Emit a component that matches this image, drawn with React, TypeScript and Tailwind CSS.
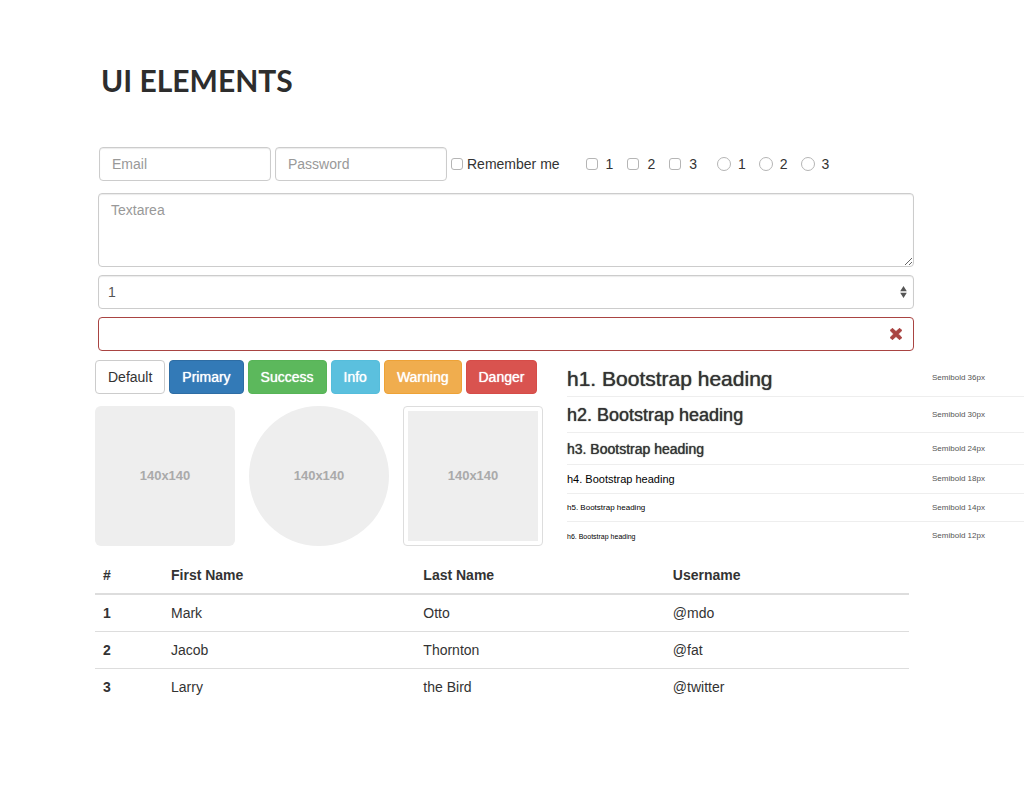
import React from 'react';

const buttons = [
  { label: 'Default', style: 'bg-white border-[#ccc] text-[#333]' },
  { label: 'Primary', style: 'bg-[#337ab7] border-[#2e6da4] text-white text-shadow-[0_0_1px_#fff]' },
  { label: 'Success', style: 'bg-[#5cb85c] border-[#57b457] text-white text-shadow-[0_0_1px_#fff]' },
  { label: 'Info', style: 'bg-[#5bc0de] border-[#55bddb] text-white text-shadow-[0_0_1px_#fff]' },
  { label: 'Warning', style: 'bg-[#f0ad4e] border-[#eea236] text-white text-shadow-[0_0_1px_#fff]' },
  { label: 'Danger', style: 'bg-[#d9534f] border-[#d64c48] text-white text-shadow-[0_0_1px_#fff]' },
];

const headings = [
  { tag: 'h1', size: 'text-[21px] text-shadow-[0_0_1px_#333]', row: 'h-[37px]', note: 'Semibold 36px' },
  { tag: 'h2', size: 'text-[18px] text-shadow-[0_0_1px_#333]', row: 'h-[36px]', note: 'Semibold 30px' },
  { tag: 'h3', size: 'text-[14px] text-shadow-[0_0_1px_#333]', row: 'h-[32px]', note: 'Semibold 24px' },
  { tag: 'h4', size: 'text-[11px] text-black', row: 'h-[29px]', note: 'Semibold 18px' },
  { tag: 'h5', size: 'text-[8px] text-black', row: 'h-[28px]', note: 'Semibold 14px' },
  { tag: 'h6', size: 'text-[7px] text-black', row: 'h-[28px]', note: 'Semibold 12px' },
];

const people = [
  { id: 1, first: 'Mark', last: 'Otto', user: '@mdo' },
  { id: 2, first: 'Jacob', last: 'Thornton', user: '@fat' },
  { id: 3, first: 'Larry', last: 'the Bird', user: '@twitter' },
];

const field =
  'block bg-white border border-[#ccc] rounded-[4px] px-3 text-[#555] placeholder:text-[#999] shadow-[inset_0_1px_1px_rgba(0,0,0,0.08)]';
const checkbox = 'appearance-none size-3 shrink-0 bg-white border border-[#b5b5b5] rounded-[3px] checked:bg-[#337ab7]';
const radio = 'appearance-none size-[14px] shrink-0 bg-white border border-[#b5b5b5] rounded-full checked:bg-[#337ab7]';

const InlineForm = () => (
  <div className="flex items-center pl-px">
    <div className="flex items-center gap-1">
      <input type="email" aria-label="Email" placeholder="Email" className={`${field} h-[34px] w-[172px]`} />
      <input type="password" aria-label="Password" placeholder="Password" className={`${field} h-[34px] w-[172px]`} />
      <label className="flex items-center gap-1">
        <input type="checkbox" className={checkbox} />
        Remember me
      </label>
    </div>
    <div className="flex gap-[14px] ml-[26px]">
      {[1, 2, 3].map((n) => (
        <label key={n} className="flex items-center gap-2">
          <input type="checkbox" className={checkbox} />
          {n}
        </label>
      ))}
    </div>
    <div className="flex gap-[13px] ml-5">
      {[1, 2, 3].map((n) => (
        <label key={n} className="flex items-center gap-[7px]">
          <input type="radio" name="number" className={radio} />
          {n}
        </label>
      ))}
    </div>
  </div>
);

const SelectField = () => (
  <div className="relative">
    <select aria-label="Number" className={`${field} appearance-none h-[34px] w-full !px-[9px]`}>
      <option>1</option>
      <option>2</option>
      <option>3</option>
    </select>
    <svg viewBox="0 0 7 12" className="absolute right-[7px] top-[11px] w-[7px] h-3 pointer-events-none" fill="#555">
      <path d="M3.5 0 6.8 5.3H.2zM3.5 12 .2 6.7h6.6z" />
    </svg>
  </div>
);

const ErrorField = () => (
  <div className="relative">
    <input
      type="text"
      aria-label="Input with error"
      aria-invalid="true"
      className="block h-[34px] w-full px-3 bg-white border border-[#a94442] rounded-[4px]"
    />
    <svg viewBox="0 0 12 12" className="absolute right-3 top-[11px] size-3 pointer-events-none" fill="#a94442">
      <path d="M2.6.5 6 3.6 9.4.5l.6.1 1.5 1.5v.7L8.3 6l3.2 3.2v.7L10 11.4l-.6.1L6 8.4l-3.4 3.1-.6-.1L.5 9.9v-.7L3.7 6 .5 2.8v-.7L2 .6z" stroke="#a94442" />
    </svg>
  </div>
);

const Thumbs = () => (
  <div className="flex gap-[14px] mt-3 text-[13px] font-bold text-[#aaa]">
    <div className="size-[140px] flex items-center justify-center bg-[#eee] rounded-[6px]">140x140</div>
    <div className="size-[140px] flex items-center justify-center bg-[#eee] rounded-full">140x140</div>
    <div className="size-[140px] p-1 border border-[#ddd] rounded-[4px]">
      <div className="size-full flex items-center justify-center bg-[#eee]">140x140</div>
    </div>
  </div>
);

const Headings = () => (
  <div className="flex-1 min-w-0">
    {headings.map(({ tag: Tag, size, row, note }: any) => (
      <div key={note} className={`${row} flex items-center border-b border-[#eee] last:border-b-0`}>
        <Tag className={`${size} flex-1 leading-none`}>{Tag}. Bootstrap heading</Tag>
        <span className="w-[92px] text-[8px] leading-none text-[#555]">{note}</span>
      </div>
    ))}
  </div>
);

const PeopleTable = () => (
  <table className="w-full table-fixed text-left">
    <thead>
      <tr className="border-b-2 border-[#ddd]">
        <th className="w-[68px] p-2">#</th>
        <th className="w-[31%] p-2">First Name</th>
        <th className="p-2">Last Name</th>
        <th className="w-[30%] p-2">Username</th>
      </tr>
    </thead>
    <tbody>
      {people.map((p) => (
        <tr key={p.id} className="border-b border-[#ddd] last:border-b-0">
          <th className="p-2">{p.id}</th>
          <td className="p-2">{p.first}</td>
          <td className="p-2">{p.last}</td>
          <td className="p-2">{p.user}</td>
        </tr>
      ))}
    </tbody>
  </table>
);

export default function App() {
  return (
    <main className="min-h-screen bg-white pt-[60px] pb-16 pl-[95px] text-[14px] leading-5 text-[#333] font-['Liberation_Sans',Arial,sans-serif]">
      <p className="pl-[6px] text-[30px] leading-10 font-bold text-[#2d2d2d] font-[Lato,sans-serif]">UI ELEMENTS</p>

      <form className="mt-[47px] pl-[3px] pr-[110px]">
        <InlineForm />
        <textarea
          aria-label="Textarea"
          placeholder="Textarea"
          className={`${field} h-[74px] w-full mt-3 mb-2 py-[6px]`}
        />
        <SelectField />
        <div className="h-2" />
        <ErrorField />
      </form>

      <div className="flex gap-6 mt-[9px]">
        <div className="w-[448px] shrink-0">
          <div className="flex gap-1">
            {buttons.map((b) => (
              <button key={b.label} type="button" className={`${b.style} h-[34px] px-3 border rounded-[4px] cursor-pointer`}>
                {b.label}
              </button>
            ))}
          </div>
          <Thumbs />
        </div>
        <Headings />
      </div>

      <div className="mt-[7px] pr-[115px]">
        <PeopleTable />
      </div>
    </main>
  );
}
